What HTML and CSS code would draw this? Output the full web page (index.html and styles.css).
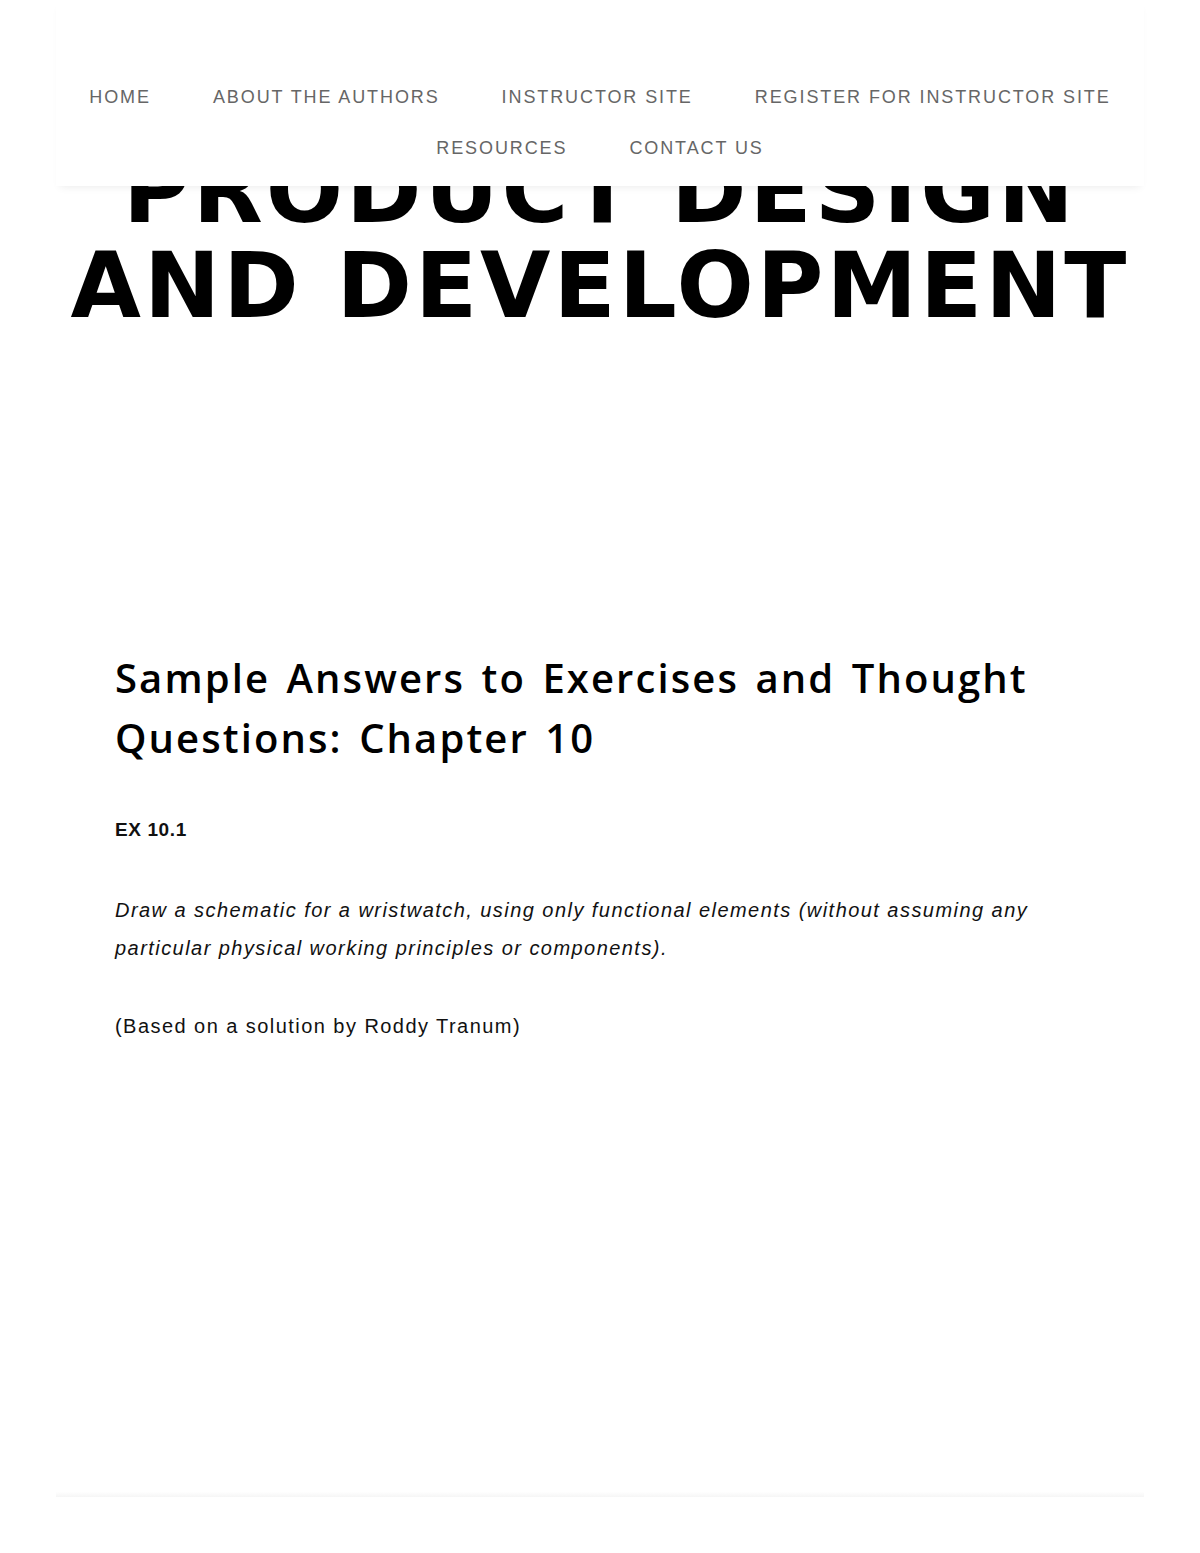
FILE: index.html
```html
<!DOCTYPE html>
<html lang="en">
<head>
<meta charset="utf-8">
<title>Product Design and Development</title>
<link rel="stylesheet" href="styles.css">
</head>
<body>
<div class="page">
  <header class="site-header">
    <nav class="nav">
      <ul class="nav-row">
        <li><a href="#">HOME</a></li>
        <li><a href="#">ABOUT THE AUTHORS</a></li>
        <li><a href="#">INSTRUCTOR SITE</a></li>
        <li><a href="#">REGISTER FOR INSTRUCTOR SITE</a></li>
        <li><a href="#">RESOURCES</a></li>
        <li><a href="#">CONTACT US</a></li>
      </ul>
    </nav>
  </header>
  <div class="masthead">
    <h1 class="site-title">PRODUCT DESIGN<br>AND DEVELOPMENT</h1>
  </div>
  <main class="content">
    <h2 class="post-title">Sample Answers to Exercises and Thought Questions: Chapter 10</h2>
    <p class="ex-label">EX 10.1</p>
    <p class="question">Draw a schematic for a wristwatch, using only functional elements (without assuming any particular physical working principles or components).</p>
    <p class="credit">(Based on a solution by Roddy Tranum)</p>
  </main>
  <footer class="site-footer"></footer>
</div>
</body>
</html>
```

FILE: styles.css
```css
html, body {
  margin: 0;
  padding: 0;
  background: #fff;
}
body {
  font-family: "Liberation Sans", Arial, sans-serif;
  color: #111;
}
.page {
  position: relative;
  width: 1088px;
  margin: 0 auto;
  min-height: 1553px;
}
.site-header {
  position: absolute;
  top: 0;
  left: 0;
  right: 0;
  height: 186px;
  background: #fff;
  box-shadow: 0 5px 8px -4px rgba(0, 0, 0, 0.08);
  z-index: 2;
}
.nav {
  padding-top: 86px;
}
.nav-row {
  list-style: none;
  margin: 0;
  padding: 0;
  display: flex;
  flex-wrap: wrap;
  justify-content: center;
  row-gap: 28px;
}
.nav-row li {
  padding: 0 31px;
  line-height: 22px;
}
.nav-row a {
  color: #666;
  text-decoration: none;
  font-size: 18px;
  letter-spacing: 1.9px;
  font-family: "Liberation Sans", Arial, sans-serif;
}
.masthead {
  padding-top: 143px;
  text-align: center;
}
.site-title {
  margin: 0;
  font-family: "DejaVu Sans", sans-serif;
  font-weight: 700;
  font-size: 91px;
  line-height: 95px;
  letter-spacing: 3px;
  color: #000;
}
.content {
  padding: 315px 59px 0;
}
.post-title {
  margin: 0 0 43px;
  font-family: "Open Sans", "Liberation Sans", sans-serif;
  font-weight: 600;
  font-size: 40px;
  line-height: 60px;
  letter-spacing: 2.1px;
  word-spacing: 4px;
  color: #000;
}
.ex-label {
  margin: 0 0 42px;
  font-family: "Liberation Sans", Arial, sans-serif;
  font-weight: 700;
  font-size: 19px;
  line-height: 38px;
  letter-spacing: 0.6px;
}
.question {
  margin: 0 0 40px;
  font-style: italic;
  font-size: 20px;
  line-height: 38px;
  letter-spacing: 1.45px;
  color: #111;
}
.credit {
  margin: 0;
  font-size: 20px;
  line-height: 38px;
  letter-spacing: 1.45px;
}
.site-footer {
  position: absolute;
  left: 0;
  right: 0;
  top: 1492px;
  height: 5px;
  background: linear-gradient(#fefefe, #f6f6f6);
}
```
